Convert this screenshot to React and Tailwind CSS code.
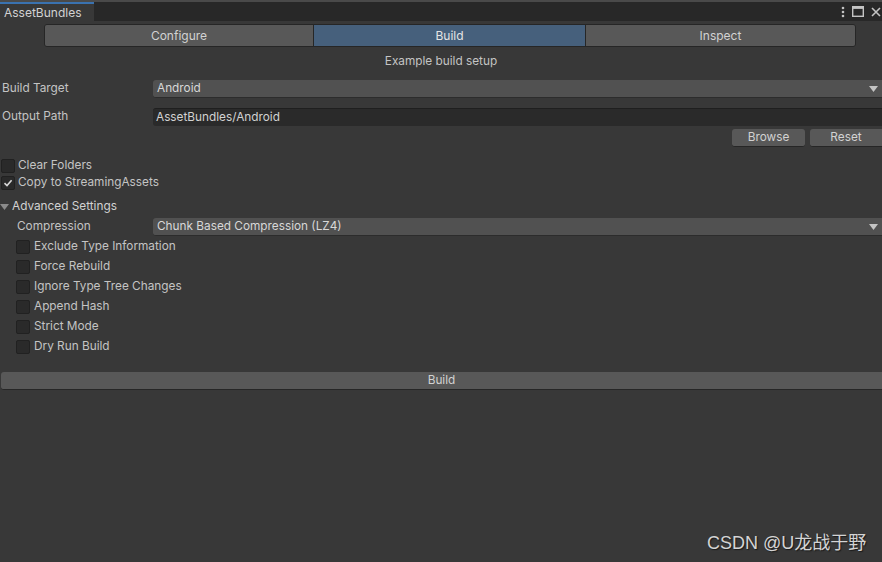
import React from 'react';

const FONT = { fontFamily: 'Inter, "Noto Sans", sans-serif' };

function Check({ checked }) {
  return (
    <span className="w-[14px] h-[14px] shrink-0 rounded-[2px] bg-[#2a2a2a] border border-[#212121] flex items-center justify-center">
      {checked && (
        <svg width="10" height="10" viewBox="0 0 10 10">
          <path d="M1.5 5.2 L4 7.6 L8.6 2.2" fill="none" stroke="#d8d8d8" strokeWidth="1.6" />
        </svg>
      )}
    </span>
  );
}

function Arrow({ color = '#c4c4c4' }) {
  return (
    <svg width="9" height="6" viewBox="0 0 9 6" className="shrink-0">
      <path d="M0 0 H9 L4.5 6 Z" fill={color} />
    </svg>
  );
}

function Dropdown({ value }) {
  return (
    <div className="flex-1 h-[18px] flex items-center justify-between pl-[4px] pr-[4px] bg-[#515151] rounded-l-[3px] border-b border-[#2c2c2c] text-[#d8d8d8]">
      <span>{value}</span>
      <Arrow />
    </div>
  );
}

const ADV = ['Exclude Type Information', 'Force Rebuild', 'Ignore Type Tree Changes', 'Append Hash', 'Strict Mode', 'Dry Run Build'];

export default function App() {
  return (
    <div style={FONT} className="w-[882px] h-[562px] bg-[#383838] text-[11.8px] text-[#c4c4c4] flex flex-col relative overflow-hidden">
      {/* header */}
      <div className="h-[21px] bg-[#282828] border-t-[2px] border-[#4a4a4a] flex items-end justify-between">
        <div className="h-[19px] w-[94px] bg-[#383838] border-t-[2px] border-[#3a72b0] flex items-center pl-[4px] text-[12px] text-[#d2d2d2]">AssetBundles</div>
        <div className="flex items-center gap-[7px] pr-[1px] h-[19px]">
          <svg width="4" height="12" viewBox="0 0 4 12"><circle cx="2" cy="2" r="1.3" fill="#c4c4c4" /><circle cx="2" cy="6" r="1.3" fill="#c4c4c4" /><circle cx="2" cy="10" r="1.3" fill="#c4c4c4" /></svg>
          <svg width="12" height="11" viewBox="0 0 12 11"><rect x="0.7" y="0.7" width="10.6" height="9.6" fill="none" stroke="#c4c4c4" strokeWidth="1.4" /><rect x="0.7" y="0.7" width="10.6" height="2.2" fill="#c4c4c4" /></svg>
          <svg width="10" height="10" viewBox="0 0 10 10"><path d="M1 1 L9 9 M9 1 L1 9" stroke="#c4c4c4" strokeWidth="1.6" /></svg>
        </div>
      </div>

      {/* toolbar */}
      <div className="flex pl-[44px] pr-[26px] pt-[3px]">
        <div className="flex-1 h-[23px] flex rounded-[3px] border border-[#262626] overflow-hidden text-[12px] text-[#d2d2d2]">
          <div className="w-[269px] bg-[#585858] flex items-center justify-center border-r border-[#262626]">Configure</div>
          <div className="w-[272px] bg-[#46607c] flex items-center justify-center border-r border-[#262626] text-[#e4e4e4]">Build</div>
          <div className="flex-1 bg-[#585858] flex items-center justify-center">Inspect</div>
        </div>
      </div>

      <div className="text-center mt-[6px] h-[16px] leading-[16px]">Example build setup</div>

      {/* build target */}
      <div className="flex items-center mt-[11px] h-[18px]">
        <div className="w-[153px] pl-[2px]">Build Target</div>
        <Dropdown value="Android" />
      </div>

      <div className="flex items-center mt-[10px] h-[18px]">
        <div className="w-[153px] pl-[2px]">Output Path</div>
        <div className="flex-1 h-[18px] bg-[#2a2a2a] border-t border-[#1f1f1f] rounded-l-[3px] pl-[3px] flex items-center text-[#d2d2d2]">AssetBundles/Android</div>
      </div>

      <div className="flex justify-end gap-[5px] mt-[3px] text-[#d2d2d2]">
        <div className="w-[73px] h-[18px] bg-[#585858] rounded-[3px] border-b border-[#262626] flex items-center justify-center">Browse</div>
        <div className="w-[72px] h-[18px] bg-[#585858] rounded-l-[3px] border-b border-[#262626] flex items-center justify-center">Reset</div>
      </div>

      <div className="flex flex-col mt-[12px] pl-[1px] gap-[3px]">
        <div className="flex items-center gap-[3px] h-[14px]"><Check /><span>Clear Folders</span></div>
        <div className="flex items-center gap-[3px] h-[14px]"><Check checked /><span>Copy to StreamingAssets</span></div>
      </div>

      <div className="flex items-center gap-[3px] mt-[10px] h-[14px] text-[#d2d2d2]">
        <Arrow color="#8a8a8a" />
        <span>Advanced Settings</span>
      </div>

      <div className="flex items-center mt-[4px] h-[18px]">
        <div className="w-[153px] pl-[17px]">Compression</div>
        <Dropdown value="Chunk Based Compression (LZ4)" />
      </div>

      <div className="flex flex-col pl-[16px] mt-[1px]">
        {ADV.map((t) => (
          <div key={t} className="flex items-center gap-[4px] h-[20px]"><Check /><span>{t}</span></div>
        ))}
      </div>

      <div className="mt-[15px] pl-[1px]">
        <div className="h-[18px] bg-[#585858] rounded-l-[3px] border-b border-[#262626] flex items-center justify-center text-[#d2d2d2]">Build</div>
      </div>

      <div className="absolute left-[707px] top-[530px] text-[18px] text-[#d4d4d4] [text-shadow:1px_1px_1px_#1a1a1a]" style={{ fontFamily: 'Liberation Sans, "Noto Sans CJK SC", sans-serif' }}>CSDN @U龙战于野</div>
    </div>
  );
}
